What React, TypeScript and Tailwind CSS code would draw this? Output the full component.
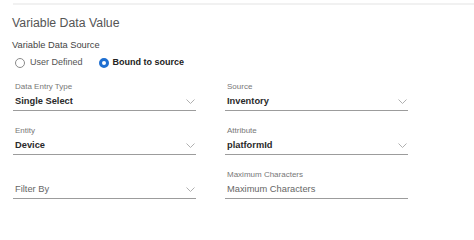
import React from "react";

function Chevron() {
  return (
    <svg width="9" height="5" viewBox="0 0 9 5" className="shrink-0">
      <path d="M0.5 0.5 L4.5 4.5 L8.5 0.5" fill="none" stroke="#b0b0b0" strokeWidth="1" />
    </svg>
  );
}

function Field({
  label,
  value,
  placeholder,
  select,
}: {
  label?: string;
  value: string;
  placeholder?: boolean;
  select?: boolean;
}) {
  return (
    <div className="flex flex-col border-b border-[#9c9c9c] pb-[2px]">
      <div className="h-[10px] pl-[2px] text-[8px] leading-[10px] text-[#777]">
        {label}
      </div>
      <div className="mt-[2px] flex h-[14px] items-center justify-between pl-[2px] pr-[1px]">
        <span
          className={
            placeholder
              ? "text-[9.3px] leading-[14px] text-[#666]"
              : "text-[9.3px] font-bold leading-[14px] text-[#2a2a2a]"
          }
        >
          {value}
        </span>
        {select && <Chevron />}
      </div>
    </div>
  );
}

export default function App() {
  return (
    <main
      className="h-[217px] w-[474px] overflow-hidden bg-white pt-[3px] pl-3"
      style={{ fontFamily: '"Liberation Sans", Arial, sans-serif' }}
    >
      <div className="ml-[1px] border-t-2 border-[#f1f1f1]" />

      <h2 className="mt-[10px] text-[12.3px] leading-[16px] text-[#555]">
        Variable Data Value
      </h2>

      <div className="mt-[8px] text-[9.3px] leading-[12px] text-[#444]">
        Variable Data Source
      </div>

      {/* Radios */}
      <div className="mt-[6px] flex h-[12px] items-center pl-[3px]">
        <span className="h-[10px] w-[10px] rounded-full border border-[#8a8a8a] bg-white" />
        <span className="ml-[5px] text-[9px] text-[#555]">User Defined</span>
        <span className="ml-[16px] h-[10px] w-[10px] rounded-full border-[3px] border-[#1f6fd1] bg-white" />
        <span className="ml-[4px] text-[9px] font-bold text-[#222]">
          Bound to source
        </span>
      </div>

      {/* Fields */}
      <div className="mt-[13px] ml-[1px] grid w-[395px] grid-cols-2 gap-x-[29px] gap-y-[15px]">
        <Field label="Data Entry Type" value="Single Select" select />
        <Field label="Source" value="Inventory" select />
        <Field label="Entity" value="Device" select />
        <Field label="Attribute" value="platformId" select />
        <Field value="Filter By" placeholder select />
        <Field label="Maximum Characters" value="Maximum Characters" placeholder />
      </div>
    </main>
  );
}
